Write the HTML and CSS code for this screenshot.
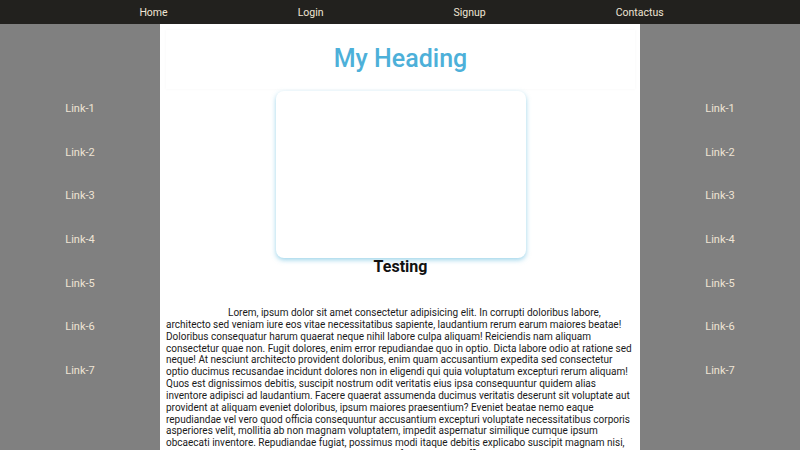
FILE: index.html
```html
<!DOCTYPE html>
<html lang="en">
<head>
<meta charset="utf-8">
<title>My Heading</title>
<link rel="stylesheet" href="styles.css">
</head>
<body>
<nav class="topnav">
  <a href="#">Home</a>
  <a href="#">Login</a>
  <a href="#">Signup</a>
  <a href="#">Contactus</a>
</nav>
<div class="layout">
  <aside class="side">
    <a href="#">Link-1</a>
    <a href="#">Link-2</a>
    <a href="#">Link-3</a>
    <a href="#">Link-4</a>
    <a href="#">Link-5</a>
    <a href="#">Link-6</a>
    <a href="#">Link-7</a>
  </aside>
  <main class="main">
    <header class="head"><h1>My Heading</h1></header>
    <div class="card"></div>
    <h2 class="caption">Testing</h2>
    <p class="text">Lorem, ipsum dolor sit amet consectetur adipisicing elit. In corrupti doloribus labore, architecto sed veniam iure eos vitae necessitatibus sapiente, laudantium rerum earum maiores beatae! Doloribus consequatur harum quaerat neque nihil labore culpa aliquam! Reiciendis nam aliquam consectetur quae non. Fugit dolores, enim error repudiandae quo in optio. Dicta labore odio at ratione sed neque! At nesciunt architecto provident doloribus, enim quam accusantium expedita sed consectetur optio ducimus recusandae incidunt dolores non in eligendi qui quia voluptatum excepturi rerum aliquam! Quos est dignissimos debitis, suscipit nostrum odit veritatis eius ipsa consequuntur quidem alias inventore adipisci ad laudantium. Facere quaerat assumenda ducimus veritatis deserunt sit voluptate aut provident at aliquam eveniet doloribus, ipsum maiores praesentium? Eveniet beatae nemo eaque repudiandae vel vero quod officia consequuntur accusantium excepturi voluptate necessitatibus corporis asperiores velit, mollitia ab non magnam voluptatem, impedit aspernatur similique cumque ipsum obcaecati inventore. Repudiandae fugiat, possimus modi itaque debitis explicabo suscipit magnam nisi, quibusdam natus odit sequi, quasi laborum nostrum fuga eum. Sit, officiis.</p>
  </main>
  <aside class="side">
    <a href="#">Link-1</a>
    <a href="#">Link-2</a>
    <a href="#">Link-3</a>
    <a href="#">Link-4</a>
    <a href="#">Link-5</a>
    <a href="#">Link-6</a>
    <a href="#">Link-7</a>
  </aside>
</div>
</body>
</html>
```
FILE: styles.css
```css
* { box-sizing: border-box; }
html, body {
  margin: 0;
  padding: 0;
  font-family: Roboto, "Liberation Sans", sans-serif;
  background: #808080;
  overflow: hidden;
}
.topnav {
  height: 24px;
  background: #22211e;
  display: flex;
  justify-content: center;
  align-items: center;
  gap: 130px;
  padding-left: 3px;
}
.topnav a {
  color: #efe4d4;
  text-decoration: none;
  font-size: 10.5px;
}
.layout {
  display: grid;
  grid-template-columns: 160px 480px 160px;
  height: 426px;
}
.side {
  background: #808080;
  display: flex;
  flex-direction: column;
  align-items: center;
  padding-top: 78px;
  gap: 30.7px;
}
.side a {
  color: #efe4d4;
  text-decoration: none;
  font-size: 11px;
  line-height: 13px;
}
.main {
  background: #ffffff;
  display: flex;
  flex-direction: column;
  align-items: center;
  padding: 6px 5px 0 6px;
}
.head {
  width: 100%;
  height: 59px;
  display: flex;
  justify-content: center;
  align-items: center;
  padding-bottom: 3px;
  box-shadow: 0 0 3px rgba(0, 0, 0, 0.04);
}
.head h1 {
  margin: 0;
  color: #4db0d9;
  font-size: 25px;
  font-weight: 500;
}
.card {
  width: 250px;
  height: 167px;
  margin-top: 2px;
  border-radius: 8px;
  background: #fff;
  box-shadow: 0 2px 5px rgba(77, 176, 217, 0.55);
}
.caption {
  margin: 0;
  font-size: 16px;
  font-weight: 700;
  color: #111;
  line-height: 17px;
}
.text {
  margin: 32px 0 0;
  font-size: 10px;
  line-height: 11.85px;
  color: #1a1a1a;
  text-indent: 62px;
}
```
